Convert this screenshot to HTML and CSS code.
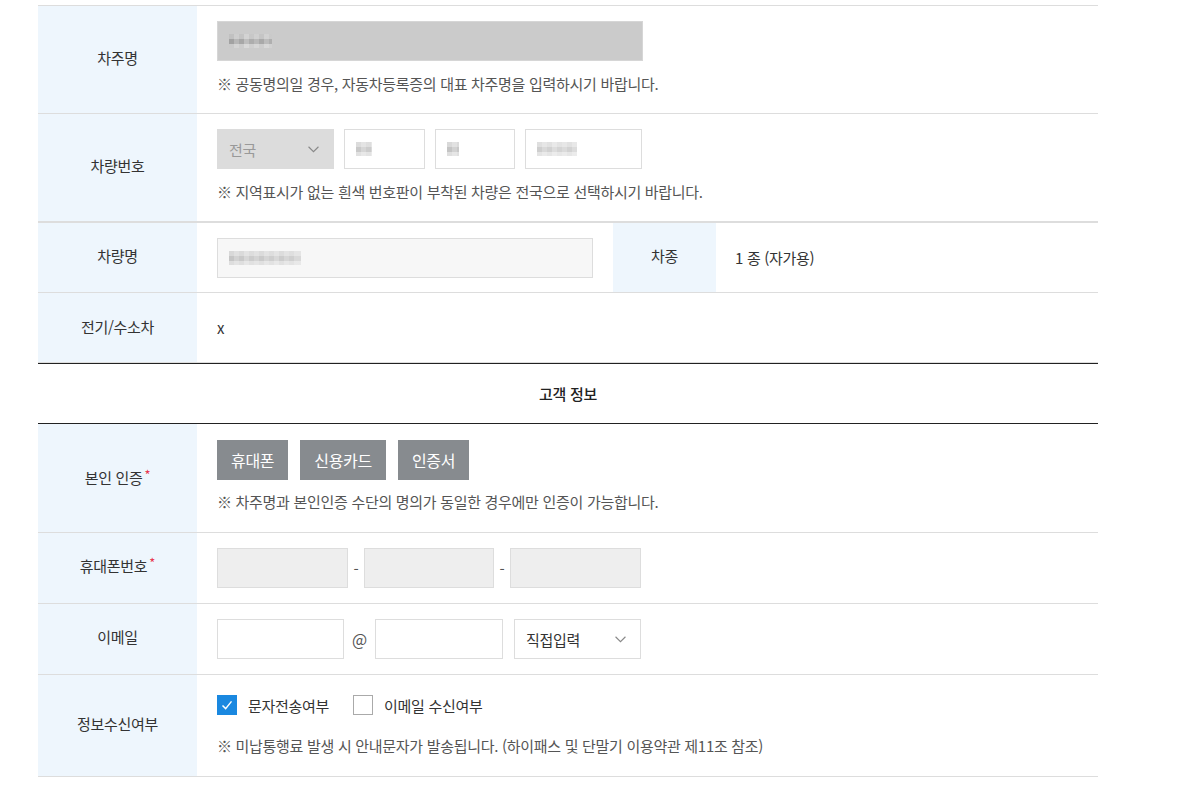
FILE: index.html
```html
<!DOCTYPE html>
<html lang="ko">
<head>
<meta charset="utf-8">
<title>차량 및 고객 정보</title>
<link rel="stylesheet" href="styles.css">
</head>
<body>
<div class="form-table">
  <div class="row row-tall">
    <div class="th">차주명</div>
    <div class="td">
      <div class="field field-gray w426"><span class="mosaic m1"></span></div>
      <p class="note">※ 공동명의일 경우, 자동차등록증의 대표 차주명을 입력하시기 바랍니다.</p>
    </div>
  </div>
  <div class="row row-tall row-thick">
    <div class="th">차량번호</div>
    <div class="td">
      <div class="inline g10">
        <div class="select select-disabled w117"><span>전국</span><svg class="chev" viewBox="0 0 10 6"><polyline points="0.5,0.5 5,5 9.5,0.5"/></svg></div>
        <div class="field w81"><span class="mosaic m2"></span></div>
        <div class="field w80"><span class="mosaic m3"></span></div>
        <div class="field w117"><span class="mosaic m4"></span></div>
      </div>
      <p class="note">※ 지역표시가 없는 흰색 번호판이 부착된 차량은 전국으로 선택하시기 바랍니다.</p>
    </div>
  </div>
  <div class="row row-short">
    <div class="th">차량명</div>
    <div class="td td-mid td-narrow">
      <div class="field field-light w376"><span class="mosaic m5"></span></div>
    </div>
    <div class="th th-sub">차종</div>
    <div class="td td-mid td-value">1 종 (자가용)</div>
  </div>
  <div class="row row-short">
    <div class="th th-low">전기/수소차</div>
    <div class="td td-mid">x</div>
  </div>
  <div class="section-head">고객 정보</div>
  <div class="row row-auth">
    <div class="th th-low">본인 인증<span class="req">*</span></div>
    <div class="td">
      <div class="inline g12">
        <button class="btn">휴대폰</button>
        <button class="btn">신용카드</button>
        <button class="btn">인증서</button>
      </div>
      <p class="note note-auth">※ 차주명과 본인인증 수단의 명의가 동일한 경우에만 인증이 가능합니다.</p>
    </div>
  </div>
  <div class="row row-short2">
    <div class="th">휴대폰번호<span class="req">*</span></div>
    <div class="td td-mid">
      <div class="inline">
        <div class="field field-phone w131"></div>
        <span class="sep w16">-</span>
        <div class="field field-phone w130"></div>
        <span class="sep w16">-</span>
        <div class="field field-phone w131"></div>
      </div>
    </div>
  </div>
  <div class="row row-short2">
    <div class="th">이메일</div>
    <div class="td td-mid">
      <div class="inline">
        <div class="field w127"></div>
        <span class="sep w31 at">@</span>
        <div class="field w128"></div>
        <div class="select w127 ml11"><span>직접입력</span><svg class="chev" viewBox="0 0 10 6"><polyline points="0.5,0.5 5,5 9.5,0.5"/></svg></div>
      </div>
    </div>
  </div>
  <div class="row row-consent">
    <div class="th">정보수신여부</div>
    <div class="td">
      <div class="inline checks">
        <label class="check"><span class="box box-on"><svg viewBox="0 0 20 20"><polyline points="5,10.5 8.5,14 15,6"/></svg></span>문자전송여부</label>
        <label class="check"><span class="box"></span>이메일 수신여부</label>
      </div>
      <p class="note note-consent">※ 미납통행료 발생 시 안내문자가 발송됩니다. (하이패스 및 단말기 이용약관 제11조 참조)</p>
    </div>
  </div>
</div>
</body>
</html>
```
FILE: styles.css
```css
* { box-sizing: border-box; }
html, body { margin: 0; padding: 0; background: #fff; }
body {
  font-family: "Noto Sans CJK KR", "Noto Sans", sans-serif;
  font-size: 15px;
  color: #333;
  letter-spacing: -0.3px;
  padding-top: 5px;
}
.form-table {
  margin-left: 38px;
  width: 1060px;
  border-top: 1px solid #ddd;
}
.row {
  display: flex;
  border-bottom: 1px solid #ddd;
}
.row-thick { border-bottom-width: 2px; }
.th {
  width: 159px;
  flex: none;
  background: #eef6fd;
  display: flex;
  align-items: center;
  justify-content: center;
  color: #333;
  line-height: 20px;
  padding-bottom: 4px;
}
.th-low { padding-bottom: 1px; }
.th-sub { width: 103px; }
.td {
  flex: 1;
  padding: 15px 20px 19px;
}
.td-mid {
  display: flex;
  align-items: center;
  padding: 0 20px;
}
.td-narrow { flex: none; width: 416px; }
.td-value { padding-left: 19px; color: #333; }
.row-tall { height: 108px; }
.row-thick { height: 109px; }
.row-short { height: 70px; }
.row-short2 { height: 71px; }
.row-auth { height: 109px; }
.row-auth .td { padding-top: 16px; }
.row-consent { height: 102px; }
.row-consent .td { padding-top: 18px; }
.section-head {
  border-top: 1px solid #222;
  border-bottom: 1px solid #222;
  height: 61px;
  display: flex;
  align-items: center;
  justify-content: center;
  font-weight: 500;
  color: #222;
}
.note {
  margin: 13px 0 0;
  line-height: 20px;
  color: #555;
}
.note-auth { margin-top: 12px; }
.note-consent { margin-top: 19px; }
.inline { display: flex; align-items: center; }
.g10 { gap: 10px; }
.g12 { gap: 12px; }
.field {
  height: 40px;
  border: 1px solid #ddd;
  background: #fff;
  display: flex;
  align-items: center;
  padding-left: 11px;
}
.field-gray { background: #cbcbcb; border-color: #d6d6d6; }
.field-light { background: #f7f7f7; }
.field-phone { background: #eee; border-color: #ddd; }
.w426 { width: 426px; }
.w376 { width: 376px; }
.w117 { width: 117px; }
.w81 { width: 81px; }
.w80 { width: 80px; }
.w131 { width: 131px; }
.w130 { width: 130px; }
.w127 { width: 127px; }
.w128 { width: 128px; }
.w16 { width: 16px; }
.w31 { width: 31px; }
.ml11 { margin-left: 11px; }
.sep {
  text-align: center;
  color: #555;
  flex: none;
}
.at { color: #555; font-size: 16px; }
.select {
  height: 40px;
  border: 1px solid #ddd;
  background: #fff;
  display: flex;
  align-items: center;
  justify-content: space-between;
  padding: 0 14px 0 11px;
  color: #333;
}
.select-disabled { background: #dcdcdc; border-color: #dcdcdc; color: #999; }
.chev {
  width: 11px;
  height: 7px;
  fill: none;
  stroke: #888;
  stroke-width: 1;
}
.btn {
  height: 40px;
  border: 0;
  background: #878b8f;
  color: #fff;
  font-family: inherit;
  font-size: 16px;
  letter-spacing: -0.3px;
  padding: 0 14px;
  cursor: pointer;
}
.req {
  color: #e8384f;
  font-size: 13px;
  margin-left: 2px;
  position: relative;
  top: -3px;
}
.checks { height: 24px; }
.check {
  display: flex;
  align-items: center;
  color: #333;
  margin-right: 24px;
}
.box {
  width: 20px;
  height: 20px;
  border: 1px solid #aaa;
  background: #fff;
  margin-right: 11px;
  display: inline-flex;
}
.box-on { background: #1a88e0; border-color: #1a88e0; }
.box-on svg {
  width: 18px;
  height: 18px;
  fill: none;
  stroke: #fff;
  stroke-width: 1.6;
}
.mosaic {
  display: inline-block;
  height: 14px;
  opacity: 0.9;
  background:
    linear-gradient(180deg, rgba(255,255,255,0.35) 0 5px, rgba(255,255,255,0) 5px 10px, rgba(255,255,255,0.45) 10px 14px),
    linear-gradient(90deg, #9e9e9e 0 5px, #b5b5b5 5px 10px, #a4a4a4 10px 15px, #bdbdbd 15px 20px, #aaa 20px 25px, #b8b8b8 25px 30px, #a6a6a6 30px 35px, #bbb 35px 40px, #adadad 40px 45px, #c0c0c0 45px 50px, #a9a9a9 50px 55px, #bcbcbc 55px 60px, #b0b0b0 60px 65px, #c2c2c2 65px 72px);
}
.m1 { width: 43px; }
.m2 { width: 16px; opacity: 0.55; }
.m3 { width: 12px; opacity: 0.6; }
.m4 { width: 40px; opacity: 0.5; }
.m5 { width: 72px; opacity: 0.55; }
```
